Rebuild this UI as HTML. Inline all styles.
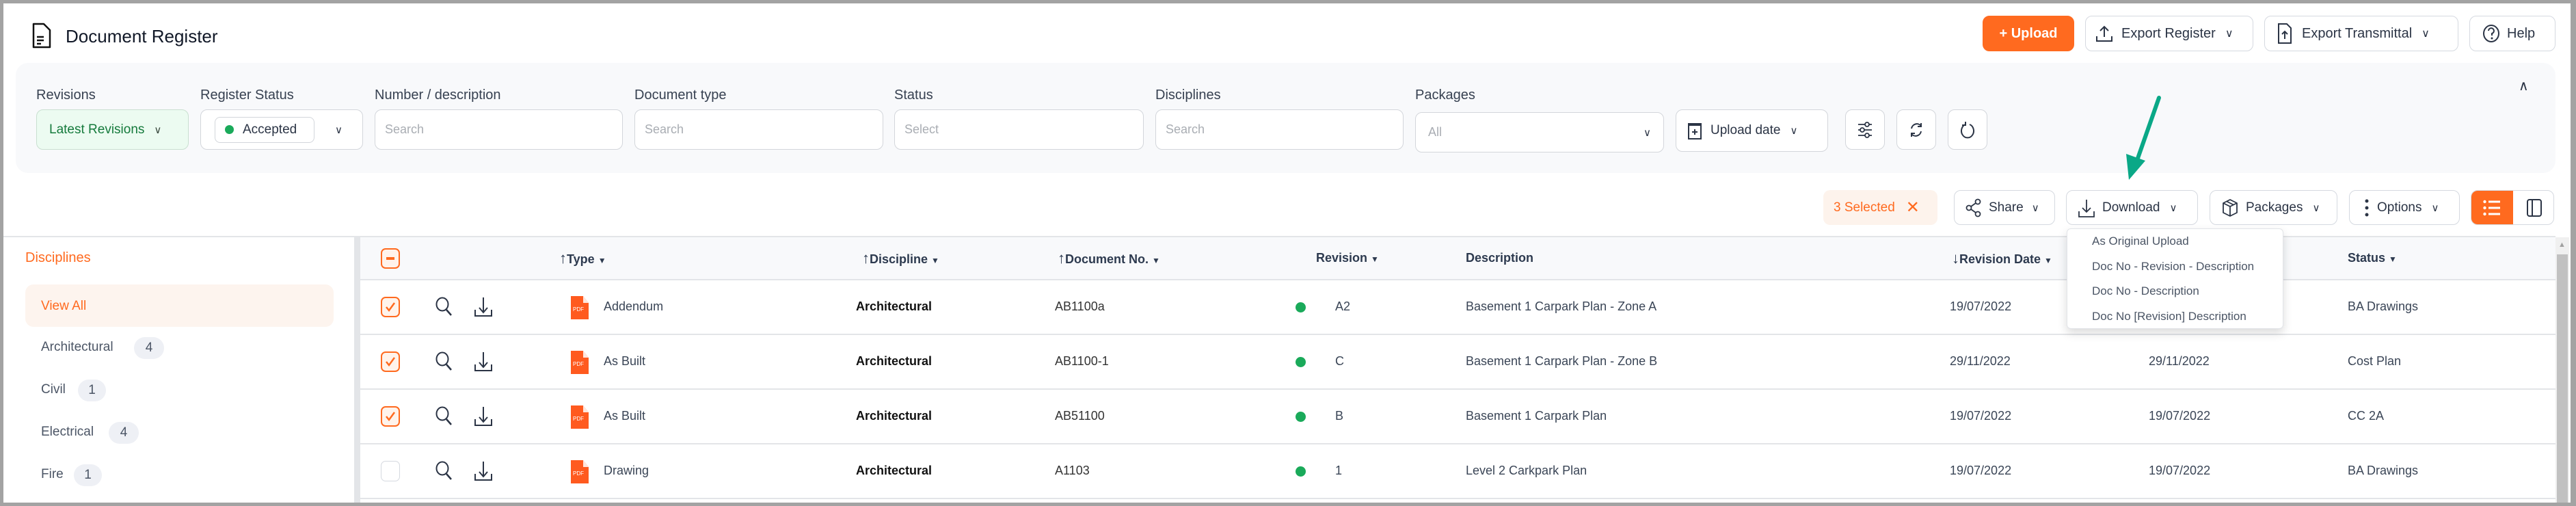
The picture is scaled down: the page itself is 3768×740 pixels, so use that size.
<!DOCTYPE html>
<html><head><meta charset="utf-8"><style>
*{box-sizing:border-box;margin:0;padding:0}
body{width:3768px;height:740px;background:#a3a3a3;font-family:"Liberation Sans",sans-serif;color:#2b3445;position:relative;overflow:hidden}
.a{position:absolute}
.page{position:absolute;left:5px;top:5px;width:3755px;height:730px;background:#fff}
.btn{position:absolute;border:1.5px solid #d5d9e0;border-radius:10px;background:#fff;display:flex;align-items:center;font-size:20px;color:#2b3445}
.lbl{position:absolute;top:128px;font-size:20px;color:#374151}
.inp{position:absolute;border:1.5px solid #d3d6db;border-radius:10px;background:#fff;display:flex;align-items:center;font-size:18px;color:#a9adb3;padding-left:14px}
.hd{position:absolute;top:365px;font-size:18px;font-weight:bold;color:#2d3a4f}
.cell{position:absolute;font-size:18px;color:#3a4556}
.cb{position:absolute;left:557px;width:28px;height:30px;border:2px solid #ff6a1f;border-radius:7px;background:#fff3eb}
.line{position:absolute;left:527px;width:3211px;height:2px;background:#e3e5e8}
.side{position:absolute;left:60px;font-size:19px;color:#4b5565}
.badge{position:absolute;height:32px;border-radius:16px;background:#eef0f5;font-size:19px;color:#4b5565;text-align:center;line-height:32px}
</style></head><body>
<div class="page"></div>
<!-- header -->
<svg class="a" style="left:46px;top:32px" width="30" height="40" viewBox="0 0 30 40"><path d="M3 3h15l9 9v25H3z" fill="none" stroke="#111" stroke-width="2.5" stroke-linejoin="round"/><path d="M8 22h10M8 27h10M8 32h6" stroke="#111" stroke-width="2.5"/></svg>
<div class="a" style="left:96px;top:38px;font-size:26px;color:#111827">Document Register</div>

<div class="btn" style="left:2900px;top:23px;width:134px;height:52px;background:#ff6a1f;border-color:#ff6a1f;color:#fff;font-weight:bold;justify-content:center">+ Upload</div>
<div class="btn" style="left:3050px;top:23px;width:246px;height:52px;padding-left:14px"><svg width="26" height="28" viewBox="0 0 26 28"><path d="M13 19V4M7 10l6-6 6 6M2 18v7h22v-7" fill="none" stroke="#2b3445" stroke-width="2"/></svg><span style="margin-left:12px">Export Register</span><span style="margin-left:14px;font-size:16px">&#8744;</span></div>
<div class="btn" style="left:3312px;top:23px;width:284px;height:52px;padding-left:18px"><svg width="22" height="32" viewBox="0 0 22 32"><path d="M2 2h12l6 6v22H2z" fill="none" stroke="#2b3445" stroke-width="2"/><path d="M11 24V13M7 17l4-4 4 4" fill="none" stroke="#2b3445" stroke-width="2"/></svg><span style="margin-left:14px">Export Transmittal</span><span style="margin-left:14px;font-size:16px">&#8744;</span></div>
<div class="btn" style="left:3612px;top:23px;width:126px;height:52px;padding-left:18px"><svg width="26" height="28" viewBox="0 0 26 28"><ellipse cx="13" cy="14" rx="11" ry="12" fill="none" stroke="#2b3445" stroke-width="2"/><path d="M9 10a4 4 0 1 1 5 4v3" fill="none" stroke="#2b3445" stroke-width="2"/><circle cx="14" cy="21" r="1.5" fill="#2b3445"/></svg><span style="margin-left:10px">Help</span></div>

<!-- filter panel -->
<div class="a" style="left:23px;top:92px;width:3715px;height:161px;background:#f8f9fb;border-radius:18px"></div>
<div class="lbl" style="left:53px">Revisions</div>
<div class="lbl" style="left:293px">Register Status</div>
<div class="lbl" style="left:548px">Number / description</div>
<div class="lbl" style="left:928px">Document type</div>
<div class="lbl" style="left:1308px">Status</div>
<div class="lbl" style="left:1690px">Disciplines</div>
<div class="lbl" style="left:2070px">Packages</div>
<div class="inp" style="left:53px;top:160px;width:223px;height:59px;background:#ecfbf1;border-color:#c9dfd0;color:#157a3c;font-size:19px;padding-left:18px">Latest Revisions<span style="margin-left:14px;font-size:15px;color:#3b4a3f">&#8744;</span></div>
<div class="inp" style="left:293px;top:160px;width:238px;height:59px;padding-left:20px"><div style="border:1.5px solid #d3d6db;border-radius:8px;height:38px;width:146px;display:flex;align-items:center;padding-left:14px;color:#2b3445;font-size:19px"><span style="width:13px;height:13px;border-radius:50%;background:#1aaa5a;display:inline-block;margin-right:13px"></span>Accepted</div><span style="margin-left:30px;font-size:15px;color:#2b3445">&#8744;</span></div>
<div class="inp" style="left:548px;top:160px;width:363px;height:59px">Search</div>
<div class="inp" style="left:928px;top:160px;width:364px;height:59px">Search</div>
<div class="inp" style="left:1308px;top:160px;width:365px;height:59px">Select</div>
<div class="inp" style="left:1690px;top:160px;width:363px;height:59px">Search</div>
<div class="inp" style="left:2070px;top:164px;width:364px;height:59px;padding-left:18px">All<span style="position:absolute;right:18px;font-size:15px;color:#2b3445">&#8744;</span></div>
<div class="inp" style="left:2451px;top:160px;width:223px;height:62px;color:#2b3445;font-size:19px;padding-left:16px"><svg width="22" height="28" viewBox="0 0 22 28"><rect x="2" y="4" width="18" height="22" fill="none" stroke="#2b3445" stroke-width="2"/><rect x="2" y="3" width="18" height="4" fill="#2b3445"/><path d="M11 12v8M7 16h8" stroke="#2b3445" stroke-width="2"/></svg><span style="margin-left:12px">Upload date</span><span style="margin-left:14px;font-size:15px">&#8744;</span></div>
<div class="inp" style="left:2699px;top:160px;width:58px;height:59px;padding-left:16px"><svg width="24" height="26" viewBox="0 0 24 26"><path d="M2 5h20M2 13h20M2 21h20" stroke="#2b3445" stroke-width="1.8"/><circle cx="15" cy="5" r="3" fill="#fff" stroke="#2b3445" stroke-width="1.8"/><circle cx="8" cy="13" r="3" fill="#fff" stroke="#2b3445" stroke-width="1.8"/><circle cx="15" cy="21" r="3" fill="#fff" stroke="#2b3445" stroke-width="1.8"/></svg></div>
<div class="inp" style="left:2774px;top:160px;width:58px;height:59px;padding-left:17px"><svg width="22" height="26" viewBox="0 0 22 26"><path d="M4 11a8 8 0 0 1 14-4M18 15a8 8 0 0 1-14 4" fill="none" stroke="#2b3445" stroke-width="2"/><path d="M18 3v5h-5M4 23v-5h5" fill="none" stroke="#2b3445" stroke-width="2"/></svg></div>
<div class="inp" style="left:2849px;top:160px;width:58px;height:59px;padding-left:17px"><svg width="22" height="28" viewBox="0 0 22 28"><path d="M8 6a9 10 0 1 0 6 0" fill="none" stroke="#2b3445" stroke-width="2"/><path d="M8 2v5H3" fill="none" stroke="#2b3445" stroke-width="2"/></svg></div>
<div class="a" style="left:3684px;top:113px;font-size:20px;color:#2b3445">&#8743;</div>

<!-- green arrow -->
<svg class="a" style="left:3100px;top:135px" width="70" height="140" viewBox="0 0 70 140"><path d="M58 8L24 105" stroke="#0aa887" stroke-width="6" stroke-linecap="round"/><path d="M10 90L14 128L38 100Z" fill="#0aa887"/></svg>

<!-- toolbar -->
<div class="a" style="left:2667px;top:278px;width:167px;height:51px;background:#fdf3ec;border-radius:10px;color:#ff6a1f;font-size:19px;display:flex;align-items:center;padding-left:15px">3 Selected<span style="margin-left:16px;font-size:24px">&#10005;</span></div>
<div class="btn" style="left:2858px;top:278px;width:148px;height:51px;padding-left:16px"><svg width="24" height="28" viewBox="0 0 24 28"><circle cx="18" cy="5" r="3.5" fill="none" stroke="#2b3445" stroke-width="1.8"/><circle cx="5" cy="14" r="3.5" fill="none" stroke="#2b3445" stroke-width="1.8"/><circle cx="18" cy="23" r="3.5" fill="none" stroke="#2b3445" stroke-width="1.8"/><path d="M8 12l7-5M8 16l7 5" stroke="#2b3445" stroke-width="1.8"/></svg><span style="margin-left:10px;font-size:19px">Share</span><span style="margin-left:12px;font-size:15px">&#8744;</span></div>
<div class="btn" style="left:3022px;top:278px;width:193px;height:51px;padding-left:16px"><svg width="26" height="30" viewBox="0 0 26 30"><path d="M13 3v18M7 15l6 6 6-6M2 20v8h22v-8" fill="none" stroke="#2b3445" stroke-width="1.8"/></svg><span style="margin-left:10px;font-size:19px">Download</span><span style="margin-left:14px;font-size:15px">&#8744;</span></div>
<div class="btn" style="left:3232px;top:278px;width:187px;height:51px;padding-left:16px"><svg width="26" height="30" viewBox="0 0 26 30"><path d="M13 3l10 5v14l-10 5-10-5V8z M3 8l10 5 10-5M13 13v14M8 5.5l10 5" fill="none" stroke="#2b3445" stroke-width="1.8" stroke-linejoin="round"/></svg><span style="margin-left:10px;font-size:19px">Packages</span><span style="margin-left:14px;font-size:15px">&#8744;</span></div>
<div class="btn" style="left:3436px;top:278px;width:162px;height:51px;padding-left:22px"><svg width="6" height="28" viewBox="0 0 6 28"><circle cx="3" cy="4" r="2.5" fill="#2b3445"/><circle cx="3" cy="14" r="2.5" fill="#2b3445"/><circle cx="3" cy="24" r="2.5" fill="#2b3445"/></svg><span style="margin-left:12px;font-size:19px">Options</span><span style="margin-left:14px;font-size:15px">&#8744;</span></div>
<div class="a" style="left:3614px;top:278px;width:122px;height:51px;border:1.5px solid #d5d9e0;border-radius:10px;overflow:hidden;background:#fff">
<div class="a" style="left:0;top:0;width:61px;height:51px;background:#ff6a1f"></div>
<svg class="a" style="left:17px;top:12px" width="26" height="26" viewBox="0 0 26 26"><path d="M8 4h17M8 13h17M8 22h17" stroke="#fff" stroke-width="3"/><circle cx="2.5" cy="4" r="2.2" fill="#fff"/><circle cx="2.5" cy="13" r="2.2" fill="#fff"/><circle cx="2.5" cy="22" r="2.2" fill="#fff"/></svg>
<svg class="a" style="left:80px;top:11px" width="24" height="28" viewBox="0 0 24 28"><rect x="2" y="2" width="20" height="24" rx="3" fill="none" stroke="#2b3445" stroke-width="2"/><path d="M9 2v24" stroke="#2b3445" stroke-width="2"/></svg>
</div>

<!-- separator -->
<div class="a" style="left:5px;top:345px;width:3733px;height:2px;background:#e3e5e8"></div>
<!-- sidebar -->
<div class="a" style="left:518px;top:347px;width:9px;height:388px;background:#e3e5e8"></div>
<div class="a" style="left:37px;top:366px;font-size:20px;color:#ff6a1f">Disciplines</div>
<div class="a" style="left:37px;top:416px;width:451px;height:62px;background:#fdf4ee;border-radius:12px"></div>
<div class="a" style="left:60px;top:437px;font-size:19px;color:#ff6a1f">View All</div>
<div class="side" style="top:497px">Architectural</div><div class="badge" style="left:196px;top:493px;width:44px">4</div>
<div class="side" style="top:559px">Civil</div><div class="badge" style="left:114px;top:555px;width:41px">1</div>
<div class="side" style="top:621px">Electrical</div><div class="badge" style="left:159px;top:617px;width:44px">4</div>
<div class="side" style="top:683px">Fire</div><div class="badge" style="left:108px;top:679px;width:41px">1</div>

<!-- table -->
<div class="a" style="left:527px;top:347px;width:3211px;height:62px;background:#f8f9fb"></div>
<div class="line" style="top:408px"></div>
<div class="line" style="top:488px"></div>
<div class="line" style="top:568px"></div>
<div class="line" style="top:648px"></div>
<div class="line" style="top:728px"></div>
<div class="cb" style="top:363px"><div class="a" style="left:6px;top:11px;width:12px;height:4px;background:#ff6a1f"></div></div>
<div class="hd" style="left:818px"><span style="font-weight:normal;font-size:22px">&#8593;</span>Type <span style="font-size:12px">&#9660;</span></div>
<div class="hd" style="left:1261px"><span style="font-weight:normal;font-size:22px">&#8593;</span>Discipline <span style="font-size:12px">&#9660;</span></div>
<div class="hd" style="left:1547px"><span style="font-weight:normal;font-size:22px">&#8593;</span>Document No. <span style="font-size:12px">&#9660;</span></div>
<div class="hd" style="left:1925px;top:367px">Revision <span style="font-size:12px">&#9660;</span></div>
<div class="hd" style="left:2144px;top:367px">Description</div>
<div class="hd" style="left:2855px"><span style="font-weight:normal;font-size:22px">&#8595;</span>Revision Date <span style="font-size:12px">&#9660;</span></div>
<div class="hd" style="left:3434px;top:367px">Status <span style="font-size:12px">&#9660;</span></div>

<!-- rows -->
<div id="rows"></div>
<script>
const rows=[["Addendum","AB1100a","A2","Basement 1 Carpark Plan - Zone A","19/07/2022","19/07/2022","BA Drawings",1],
["As Built","AB1100-1","C","Basement 1 Carpark Plan - Zone B","29/11/2022","29/11/2022","Cost Plan",1],
["As Built","AB51100","B","Basement 1 Carpark Plan","19/07/2022","19/07/2022","CC 2A",1],
["Drawing","A1103","1","Level 2 Carkpark Plan","19/07/2022","19/07/2022","BA Drawings",0]];
let h="";
rows.forEach((r,i)=>{const c=449+i*80;
h+=`<div class="cb" style="top:${c-15}px;${r[7]?'':'border-color:#d5d9e0;background:#fff;border-width:1.5px'}">${r[7]?'<svg class="a" style="left:3px;top:4px" width="18" height="18" viewBox="0 0 18 18"><path d="M3 9l4 5 8-11" fill="none" stroke="#ff6a1f" stroke-width="2.5"/></svg>':''}</div>
<svg class="a" style="left:636px;top:${c-15}px" width="28" height="30" viewBox="0 0 28 30"><ellipse cx="11" cy="11" rx="8.5" ry="9.5" fill="none" stroke="#2b3445" stroke-width="2"/><path d="M17 19l7 8" stroke="#2b3445" stroke-width="2.5"/></svg>
<svg class="a" style="left:692px;top:${c-16}px" width="30" height="32" viewBox="0 0 30 32"><path d="M15 2v22M9 17l6 7 6-7M3 20v9h24v-9" fill="none" stroke="#2b3445" stroke-width="2"/></svg>
<svg class="a" style="left:835px;top:${c-16}px" width="26" height="34" viewBox="0 0 26 34"><path d="M0 0h18l8 10v24H0z" fill="#ff5a1f"/><path d="M18 0v10h8" fill="#fff" opacity=".85"/><text x="3" y="22" font-size="8" fill="#fff" font-family="Liberation Sans">PDF</text></svg>
<div class="cell" style="left:883px;top:${c-11}px">${r[0]}</div>
<div class="cell" style="left:1252px;top:${c-11}px;font-weight:bold;color:#111">Architectural</div>
<div class="cell" style="left:1543px;top:${c-11}px;color:#333">${r[1]}</div>
<div class="a" style="left:1895px;top:${c-7}px;width:15px;height:15px;border-radius:50%;background:#1aaa5a"></div>
<div class="cell" style="left:1953px;top:${c-11}px">${r[2]}</div>
<div class="cell" style="left:2144px;top:${c-11}px">${r[3]}</div>
<div class="cell" style="left:2852px;top:${c-11}px">${r[4]}</div>
<div class="cell" style="left:3143px;top:${c-11}px">${r[5]}</div>
<div class="cell" style="left:3434px;top:${c-11}px">${r[6]}</div>`;});
document.getElementById("rows").innerHTML=h;
</script>
<!-- scrollbar -->
<div class="a" style="left:3738px;top:347px;width:20px;height:388px;background:#f0f0f0"></div>
<div class="a" style="left:3740px;top:372px;width:16px;height:363px;background:#c1c1c1"></div>
<div class="a" style="left:3742px;top:352px;font-size:11px;color:#a0a0a0">&#9650;</div>
<!-- dropdown -->
<div class="a" style="left:3023px;top:334px;width:317px;height:147px;background:#fff;border:1px solid #e2e4e8;border-radius:6px;box-shadow:0 6px 14px rgba(0,0,0,.15);font-size:17px;color:#4b5565">
<div class="a" style="left:36px;top:8px">As Original Upload</div>
<div class="a" style="left:36px;top:45px">Doc No - Revision - Description</div>
<div class="a" style="left:36px;top:81px">Doc No - Description</div>
<div class="a" style="left:36px;top:118px">Doc No [Revision] Description</div>
</div>
</body></html>
